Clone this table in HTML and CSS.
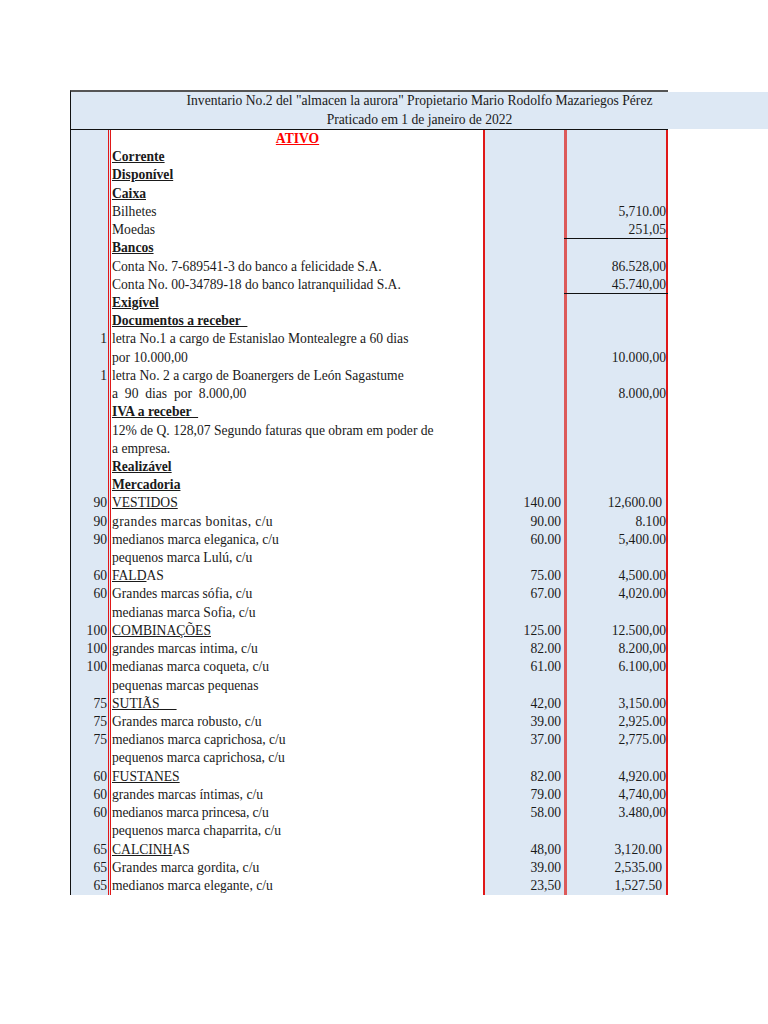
FILE: index.html
```html
<!DOCTYPE html>
<html lang="pt">
<head>
<meta charset="utf-8">
<title>Inventario No.2</title>
<link rel="stylesheet" href="styles.css">
</head>
<body>
<div class="sheet">
  <div class="head">
    <div class="hrow">Inventario No.2 del "almacen la aurora" Propietario Mario Rodolfo Mazariegos Pérez</div>
    <div class="hrow">Praticado em 1 de janeiro de 2022</div>
  </div>
  <div class="body">
    <div class="row"><div class="a"></div><div class="b center"><span class="ativo">ATIVO</span></div><div class="c"></div><div class="d"></div></div>
    <div class="row"><div class="a"></div><div class="b"><span class="h">Corrente</span></div><div class="c"></div><div class="d"></div></div>
    <div class="row"><div class="a"></div><div class="b"><span class="h">Disponível</span></div><div class="c"></div><div class="d"></div></div>
    <div class="row"><div class="a"></div><div class="b"><span class="h">Caixa</span></div><div class="c"></div><div class="d"></div></div>
    <div class="row"><div class="a"></div><div class="b">Bilhetes</div><div class="c"></div><div class="d">5,710.00</div></div>
    <div class="row"><div class="a"></div><div class="b">Moedas</div><div class="c"></div><div class="d line">251,05</div></div>
    <div class="row"><div class="a"></div><div class="b"><span class="h">Bancos</span></div><div class="c"></div><div class="d"></div></div>
    <div class="row"><div class="a"></div><div class="b">Conta No. 7-689541-3 do banco a felicidade S.A.</div><div class="c"></div><div class="d">86.528,00</div></div>
    <div class="row"><div class="a"></div><div class="b">Conta No. 00-34789-18 do banco latranquilidad S.A.</div><div class="c"></div><div class="d line">45.740,00</div></div>
    <div class="row"><div class="a"></div><div class="b"><span class="h">Exigível</span></div><div class="c"></div><div class="d"></div></div>
    <div class="row"><div class="a"></div><div class="b"><span class="h">Documentos a receber  </span></div><div class="c"></div><div class="d"></div></div>
    <div class="row"><div class="a">1</div><div class="b">letra No.1 a cargo de Estanislao Montealegre a 60 dias</div><div class="c"></div><div class="d"></div></div>
    <div class="row"><div class="a"></div><div class="b">por 10.000,00</div><div class="c"></div><div class="d">10.000,00</div></div>
    <div class="row"><div class="a">1</div><div class="b">letra No. 2 a cargo de Boanergers de León Sagastume</div><div class="c"></div><div class="d"></div></div>
    <div class="row"><div class="a"></div><div class="b">a  90  dias  por  8.000,00</div><div class="c"></div><div class="d">8.000,00</div></div>
    <div class="row"><div class="a"></div><div class="b"><span class="h">IVA a receber  </span></div><div class="c"></div><div class="d"></div></div>
    <div class="row"><div class="a"></div><div class="b">12% de Q. 128,07 Segundo faturas que obram em poder de</div><div class="c"></div><div class="d"></div></div>
    <div class="row"><div class="a"></div><div class="b">a empresa.</div><div class="c"></div><div class="d"></div></div>
    <div class="row"><div class="a"></div><div class="b"><span class="h">Realizável</span></div><div class="c"></div><div class="d"></div></div>
    <div class="row"><div class="a"></div><div class="b"><span class="h">Mercadoria</span></div><div class="c"></div><div class="d"></div></div>
    <div class="row"><div class="a">90</div><div class="b"><span class="u">VESTIDOS</span></div><div class="c">140.00</div><div class="d sp">12,600.00</div></div>
    <div class="row"><div class="a">90</div><div class="b wide">grandes marcas bonitas, c/u</div><div class="c">90.00</div><div class="d">8.100</div></div>
    <div class="row"><div class="a">90</div><div class="b">medianos marca eleganica, c/u</div><div class="c">60.00</div><div class="d">5,400.00</div></div>
    <div class="row"><div class="a"></div><div class="b">pequenos marca Lulú, c/u</div><div class="c"></div><div class="d"></div></div>
    <div class="row"><div class="a">60</div><div class="b"><span class="u">FALD</span>AS</div><div class="c">75.00</div><div class="d">4,500.00</div></div>
    <div class="row"><div class="a">60</div><div class="b">Grandes marcas sófia, c/u</div><div class="c">67.00</div><div class="d">4,020.00</div></div>
    <div class="row"><div class="a"></div><div class="b">medianas marca Sofia, c/u</div><div class="c"></div><div class="d"></div></div>
    <div class="row"><div class="a">100</div><div class="b"><span class="u">COMBINAÇÕES</span></div><div class="c">125.00</div><div class="d">12.500,00</div></div>
    <div class="row"><div class="a">100</div><div class="b">grandes marcas intima, c/u</div><div class="c">82.00</div><div class="d">8.200,00</div></div>
    <div class="row"><div class="a">100</div><div class="b">medianas marca coqueta, c/u</div><div class="c">61.00</div><div class="d">6.100,00</div></div>
    <div class="row"><div class="a"></div><div class="b">pequenas marcas pequenas</div><div class="c"></div><div class="d"></div></div>
    <div class="row"><div class="a">75</div><div class="b"><span class="u">SUTIÃS     </span></div><div class="c">42,00</div><div class="d">3,150.00</div></div>
    <div class="row"><div class="a">75</div><div class="b">Grandes marca robusto, c/u</div><div class="c">39.00</div><div class="d">2,925.00</div></div>
    <div class="row"><div class="a">75</div><div class="b">medianos marca caprichosa, c/u</div><div class="c">37.00</div><div class="d">2,775.00</div></div>
    <div class="row"><div class="a"></div><div class="b">pequenos marca caprichosa, c/u</div><div class="c"></div><div class="d"></div></div>
    <div class="row"><div class="a">60</div><div class="b"><span class="u">FUSTANES</span></div><div class="c">82.00</div><div class="d">4,920.00</div></div>
    <div class="row"><div class="a">60</div><div class="b">grandes marcas íntimas, c/u</div><div class="c">79.00</div><div class="d">4,740,00</div></div>
    <div class="row"><div class="a">60</div><div class="b narrow">medianos marca princesa, c/u</div><div class="c">58.00</div><div class="d">3.480,00</div></div>
    <div class="row"><div class="a"></div><div class="b">pequenos marca chaparrita, c/u</div><div class="c"></div><div class="d"></div></div>
    <div class="row"><div class="a">65</div><div class="b"><span class="u">CALCINH</span>AS</div><div class="c">48,00</div><div class="d sp">3,120.00</div></div>
    <div class="row"><div class="a">65</div><div class="b">Grandes marca gordita, c/u</div><div class="c">39.00</div><div class="d sp">2,535.00</div></div>
    <div class="row"><div class="a">65</div><div class="b">medianos marca elegante, c/u</div><div class="c">23,50</div><div class="d sp">1,527.50</div></div>
  </div>
</div>
</body>
</html>
```

FILE: styles.css
```css
html, body {
  margin: 0;
  padding: 0;
  background: #ffffff;
}

body {
  font-family: "Liberation Serif", "Times New Roman", serif;
  font-size: 13.6px;
  color: #1a1a1a;
  padding: 90px 0 0 70px;
}

.sheet {
  width: 597px;
  border-left: 1px solid #111;
  border-top: 2px solid #555;
}

.head {
  background: #dde8f4;
  margin-right: -100px;
}

.hrow {
  height: 18.5px;
  line-height: 18.5px;
  text-align: center;
  white-space: nowrap;
}

.body {
  border-top: 1px solid #111;
}

.row {
  display: grid;
  grid-template-columns: 40px 372px 81px 104px;
  height: 18.22px;
  line-height: 18.22px;
}

.row > div {
  box-sizing: border-box;
  white-space: pre;
  overflow: visible;
}

.a {
  background: #dde8f4;
  border-right: 3px double #e01818;
  text-align: right;
  padding-right: 1px;
}

.b {
  background: #ffffff;
  padding-left: 1px;
}

.b.center {
  text-align: center;
}

.b.wide {
  letter-spacing: 0.4px;
}

.b.narrow {
  letter-spacing: -0.15px;
}

.c {
  background: #dde8f4;
  border-left: 2px solid #e01818;
  text-align: right;
  padding-right: 3px;
}

.d {
  background: #dde8f4;
  border-left: 3px solid #dc5a5a;
  border-right: 2px solid #e01818;
  text-align: right;
  padding-right: 0;
}

.d.sp {
  padding-right: 4px;
}

.d.line {
  position: relative;
}

.d.line::after {
  content: "";
  position: absolute;
  left: -3px;
  right: -2px;
  bottom: 0;
  border-bottom: 1px solid #111;
}

.h {
  font-weight: bold;
  text-decoration: underline;
}

.u {
  text-decoration: underline;
}

.ativo {
  color: #ff0000;
  font-weight: bold;
  text-decoration: underline;
}
```
